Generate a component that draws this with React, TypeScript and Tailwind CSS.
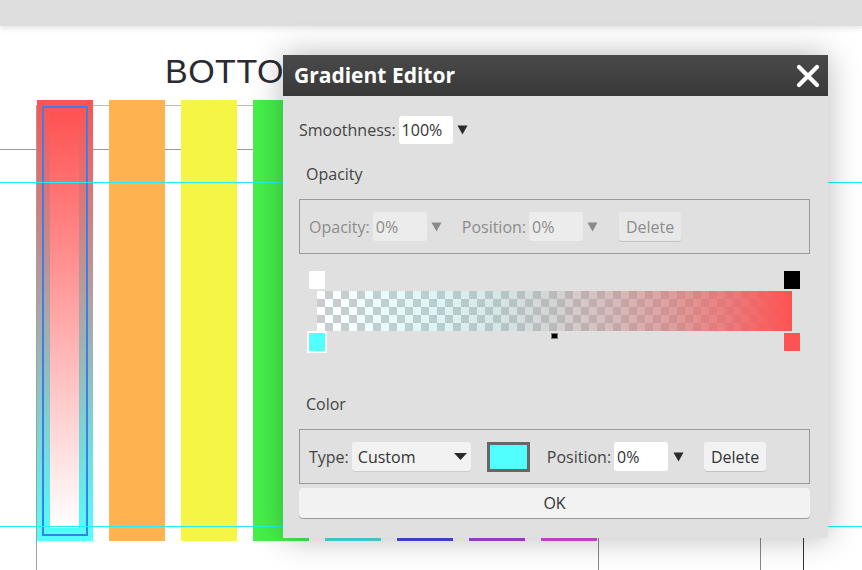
import React from "react";

const font = { fontFamily: '"Open Sans", "Noto Sans", sans-serif' };

function Arrow({ muted = false }: { muted?: boolean }) {
  return (
    <svg width="11" height="10" viewBox="0 0 11 10" className="shrink-0">
      <polygon points="0.5,0.5 10.5,0.5 5.5,9.5" fill={muted ? "#8a8a8a" : "#2a2a2a"} />
    </svg>
  );
}

const bars = ["#ffb24f", "#f5f545", "#45f04a", "#48e2e2", "#4848e0", "#a348e0", "#e048e0"];

export default function App() {
  return (
    <div className="relative h-[570px] w-[862px] overflow-hidden bg-white" style={font}>
      {/* top toolbar strip */}
      <div className="h-[26px] w-full bg-[#dedede] shadow-[0_2px_6px_rgba(0,0,0,0.12)]" />

      {/* canvas */}
      <div className="absolute left-0 top-[26px] h-[544px] w-full">
        <div className="absolute left-[165px] top-[28px] text-[34px] leading-none tracking-[0.5px] text-[#2a2a32]" style={{ fontFamily: '"Liberation Sans", Arial, sans-serif' }}>
          BOTTOM
        </div>
        <div className="absolute left-[36px] top-[79px] h-px w-[760px] bg-[#bbbbbb]" />
        <div className="absolute left-0 top-[123px] h-px w-[760px] bg-[#999999]" />
        <div className="absolute left-[36px] top-[79px] h-[470px] w-px bg-[#a0a0a0]" />

        {/* selected bar with gradient */}
        <div className="absolute left-[37px] top-[74px] h-[441px] w-[56px] bg-[linear-gradient(to_bottom,#ff5252,#52ffff)]">
          <div className="absolute left-[13px] top-[12px] h-[416px] w-[29px] bg-[linear-gradient(to_bottom,#ff5252,#ffffff)]" />
          <div className="absolute left-[5px] top-[6px] h-[430px] w-[46px] border-2 border-[#3a80e8]" />
        </div>

        {bars.map((c, i) => (
          <div
            key={c}
            className="absolute top-[74px] h-[441px] w-[56px]"
            style={{ left: 109 + i * 72, background: c }}
          />
        ))}

        <div className="absolute left-[598px] top-[400px] h-[150px] w-px bg-[#888888]" />
        <div className="absolute left-[760px] top-[400px] h-[150px] w-px bg-[#888888]" />
        <div className="absolute left-[803px] top-[400px] h-[150px] w-px bg-[#333333]" />

        <div className="absolute left-0 top-[156px] h-px w-full bg-[#22f0f0]" />
        <div className="absolute left-0 top-[500px] h-px w-full bg-[#22f0f0]" />
      </div>

      {/* Gradient editor dialog */}
      <div className="absolute left-[283px] top-[55px] flex h-[483px] w-[545px] flex-col bg-[#e0e0e0] shadow-[0_0_30px_rgba(0,0,0,0.28)]">
        <div className="flex h-[41px] shrink-0 items-center justify-between bg-[linear-gradient(to_bottom,#4a4a4a,#383838)] pl-[11px] pr-[8px]">
          <span className="text-[21px] font-bold text-white">Gradient Editor</span>
          <svg width="24" height="24" viewBox="0 0 24 24">
            <path d="M3 3 L21 21 M21 3 L3 21" stroke="#ffffff" strokeWidth="4.2" strokeLinecap="round" />
          </svg>
        </div>

        <div className="flex flex-col px-[16px] text-[16px] text-[#444]">
          <div className="mt-[20px] flex h-[28px] items-center">
            <span>Smoothness:</span>
            <div className="ml-[3px] flex h-[28px] w-[54px] items-center rounded-[3px] bg-white pl-[3px] text-[#333]">100%</div>
            <span className="ml-[4px]"><Arrow /></span>
          </div>

          <div className="mt-[20px] h-[20px] pl-[7px] leading-[20px]">Opacity</div>

          <div className="mt-[15px] flex h-[55px] w-[511px] items-center border border-[#999] pl-[9px] text-[#8c8c8c]">
            <span>Opacity:</span>
            <div className="ml-[3px] flex h-[29px] w-[54px] items-center rounded-[3px] bg-[#ececec] pl-[3px]">0%</div>
            <span className="ml-[4px]"><Arrow muted /></span>
            <span className="ml-[20px]">Position:</span>
            <div className="ml-[3px] flex h-[29px] w-[54px] items-center rounded-[3px] bg-[#ececec] pl-[3px]">0%</div>
            <span className="ml-[4px]"><Arrow muted /></span>
            <div className="ml-[21px] flex h-[29px] w-[62px] items-center justify-center rounded-[3px] bg-[#e8e8e8] shadow-[0_1px_0_#c4c4c4]">Delete</div>
          </div>

          <div className="relative mt-[17px] h-[82px] w-[511px]">
            <div className="absolute left-[10px] top-0 h-[18px] w-[16px] bg-white" />
            <div className="absolute left-[485px] top-0 h-[18px] w-[16px] bg-black" />
            <div className="absolute left-[18px] top-[20px] h-[40px] w-[475px] bg-[conic-gradient(#cccccc_0_25%,#ffffff_0_50%,#cccccc_0_75%,#ffffff_0)] bg-[length:16px_16px]">
              <div className="h-full w-full bg-[linear-gradient(to_right,rgba(82,255,255,0),rgba(104,233,233,0.125)_12.5%,rgba(125,212,212,0.25)_25%,rgba(147,190,190,0.375)_37.5%,rgba(168,168,168,0.5)_50%,rgba(190,147,147,0.625)_62.5%,rgba(212,125,125,0.75)_75%,rgba(233,104,104,0.875)_87.5%,#ff5252)]" />
            </div>
            <div className="absolute left-[8px] top-[60px] h-[22px] w-[20px] border-2 border-white bg-[#52ffff]" />
            <div className="absolute left-[252px] top-[62px] h-[6px] w-[7px] border border-[#777] bg-black" />
            <div className="absolute left-[485px] top-[62px] h-[18px] w-[16px] bg-[#ff5252]" />
          </div>

          <div className="mt-[41px] h-[20px] pl-[7px] leading-[20px]">Color</div>

          <div className="mt-[15px] flex h-[55px] w-[511px] items-center border border-[#999] pl-[9px]">
            <span>Type:</span>
            <div className="ml-[3px] flex h-[29px] w-[119px] items-center justify-between rounded-[3px] bg-[#f2f2f2] pl-[6px] pr-[4px] text-[#333] shadow-[0_1px_0_#cccccc]">
              <span>Custom</span>
              <svg width="13" height="7" viewBox="0 0 13 7">
                <polygon points="0,0 13,0 6.5,7" fill="#2a2a2a" />
              </svg>
            </div>
            <div className="ml-[16px] h-[30px] w-[43px] border-[3px] border-[#666] bg-[#52ffff]" />
            <span className="ml-[17px]">Position:</span>
            <div className="ml-[3px] flex h-[29px] w-[54px] items-center rounded-[3px] bg-white pl-[3px] text-[#333]">0%</div>
            <span className="ml-[5px]"><Arrow /></span>
            <div className="ml-[20px] flex h-[29px] w-[62px] items-center justify-center rounded-[3px] bg-[#f2f2f2] text-[#333] shadow-[0_1px_0_#c4c4c4]">Delete</div>
          </div>

          <div className="mt-[4px] flex h-[30px] w-[511px] items-center justify-center rounded-[4px] bg-[#f2f2f2] text-[#333] shadow-[0_1px_0_#999999]">
            OK
          </div>
        </div>
      </div>
    </div>
  );
}
